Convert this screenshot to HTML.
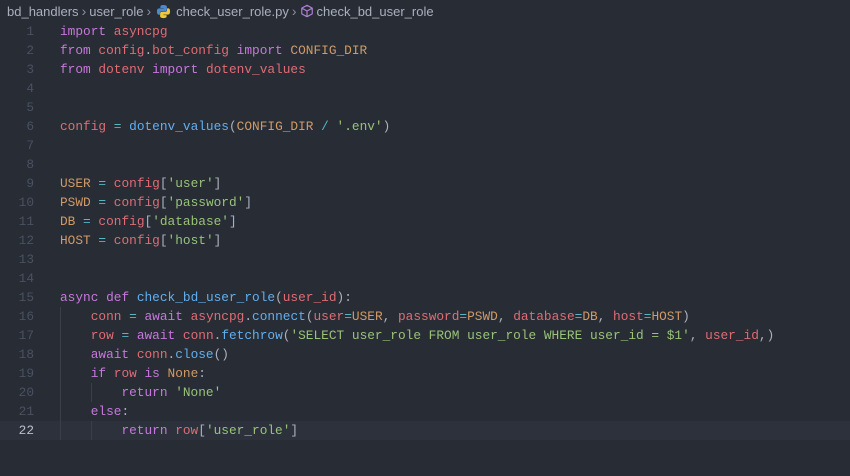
<!DOCTYPE html>
<html><head><meta charset="utf-8"><style>
html,body{margin:0;padding:0;width:850px;height:476px;background:#282c34;overflow:hidden}
.bc{position:absolute;left:0;top:0;height:22px;font:13px "Liberation Sans",sans-serif;color:#a9b0bd;line-height:22px;white-space:nowrap;padding-left:7px}
.bc .sep{color:#8a919e;margin:0 3px;font-size:14px}
.code{position:absolute;left:0;top:22px;width:850px;font:12.8px "Liberation Mono",monospace}
.ln{height:19px;line-height:19px;position:relative;white-space:pre}
.num{position:absolute;left:0;width:34px;text-align:right;color:#495162}
.txt{position:absolute;left:60px;color:#abb2bf}
.cur{background:#2c313c}
.cur .num{color:#b8bfca}
.k{color:#c678dd}.v{color:#e06c75}.f{color:#61afef}.s{color:#98c379}.c{color:#d19a66}.o{color:#56b6c2}
.g{position:absolute;width:1px;background:#3b4048;z-index:2}
</style></head><body>
<div class="bc">bd_handlers<span class="sep">›</span>user_role<span class="sep">›</span><svg width="15" height="15" viewBox="0 0 16 16" style="vertical-align:-3px;margin:0 5px 0 2px"><path d="M8 1C4.5 1 4.7 2.5 4.7 2.5V4.2H8.1V4.7H3.3S1 4.4 1 8s2 3.4 2 3.4h1.2V9.7S4.1 7.7 6.2 7.7h3.4s2 0 2-1.9V2.9S11.9 1 8 1z" fill="#4a8bd0"/><path d="M8 15c3.5 0 3.3-1.5 3.3-1.5V11.8H7.9v-.5h4.8S15 11.6 15 8s-2-3.4-2-3.4h-1.2v1.7s.1 2-2 2H6.4s-2 0-2 1.9v2.9S4.1 15 8 15z" fill="#f0c93a"/></svg>check_user_role.py<span class="sep">›</span><svg width="14" height="14" viewBox="0 0 16 16" style="vertical-align:-2px;margin-right:3px"><path d="M8 1.5 14 4.7v6.6L8 14.5 2 11.3V4.7z M2 4.7 8 8l6-3.3M8 8v6.5" fill="none" stroke="#b180d7" stroke-width="1.3" stroke-linejoin="round"/></svg>check_bd_user_role</div>
<div class="code">
<div class="g" style="left:60px;top:285px;height:133px"></div>
<div class="g" style="left:91px;top:361px;height:19px"></div>
<div class="g" style="left:91px;top:399px;height:19px"></div>
<div class="ln"><span class="num">1</span><span class="txt"><span class="k">import</span> <span class="v">asyncpg</span></span></div>
<div class="ln"><span class="num">2</span><span class="txt"><span class="k">from</span> <span class="v">config</span>.<span class="v">bot_config</span> <span class="k">import</span> <span class="c">CONFIG_DIR</span></span></div>
<div class="ln"><span class="num">3</span><span class="txt"><span class="k">from</span> <span class="v">dotenv</span> <span class="k">import</span> <span class="v">dotenv_values</span></span></div>
<div class="ln"><span class="num">4</span></div>
<div class="ln"><span class="num">5</span></div>
<div class="ln"><span class="num">6</span><span class="txt"><span class="v">config</span> <span class="o">=</span> <span class="f">dotenv_values</span>(<span class="c">CONFIG_DIR</span> <span class="o">/</span> <span class="s">'.env'</span>)</span></div>
<div class="ln"><span class="num">7</span></div>
<div class="ln"><span class="num">8</span></div>
<div class="ln"><span class="num">9</span><span class="txt"><span class="c">USER</span> <span class="o">=</span> <span class="v">config</span>[<span class="s">'user'</span>]</span></div>
<div class="ln"><span class="num">10</span><span class="txt"><span class="c">PSWD</span> <span class="o">=</span> <span class="v">config</span>[<span class="s">'password'</span>]</span></div>
<div class="ln"><span class="num">11</span><span class="txt"><span class="c">DB</span> <span class="o">=</span> <span class="v">config</span>[<span class="s">'database'</span>]</span></div>
<div class="ln"><span class="num">12</span><span class="txt"><span class="c">HOST</span> <span class="o">=</span> <span class="v">config</span>[<span class="s">'host'</span>]</span></div>
<div class="ln"><span class="num">13</span></div>
<div class="ln"><span class="num">14</span></div>
<div class="ln"><span class="num">15</span><span class="txt"><span class="k">async</span> <span class="k">def</span> <span class="f">check_bd_user_role</span>(<span class="v">user_id</span>):</span></div>
<div class="ln"><span class="num">16</span><span class="txt">    <span class="v">conn</span> <span class="o">=</span> <span class="k">await</span> <span class="v">asyncpg</span>.<span class="f">connect</span>(<span class="v">user</span><span class="o">=</span><span class="c">USER</span>, <span class="v">password</span><span class="o">=</span><span class="c">PSWD</span>, <span class="v">database</span><span class="o">=</span><span class="c">DB</span>, <span class="v">host</span><span class="o">=</span><span class="c">HOST</span>)</span></div>
<div class="ln"><span class="num">17</span><span class="txt">    <span class="v">row</span> <span class="o">=</span> <span class="k">await</span> <span class="v">conn</span>.<span class="f">fetchrow</span>(<span class="s">'SELECT user_role FROM user_role WHERE user_id = $1'</span>, <span class="v">user_id</span>,)</span></div>
<div class="ln"><span class="num">18</span><span class="txt">    <span class="k">await</span> <span class="v">conn</span>.<span class="f">close</span>()</span></div>
<div class="ln"><span class="num">19</span><span class="txt">    <span class="k">if</span> <span class="v">row</span> <span class="k">is</span> <span class="c">None</span>:</span></div>
<div class="ln"><span class="num">20</span><span class="txt">        <span class="k">return</span> <span class="s">'None'</span></span></div>
<div class="ln"><span class="num">21</span><span class="txt">    <span class="k">else</span>:</span></div>
<div class="ln cur"><span class="num">22</span><span class="txt">        <span class="k">return</span> <span class="v">row</span>[<span class="s">'user_role'</span>]</span></div>
</div>
</body></html>
